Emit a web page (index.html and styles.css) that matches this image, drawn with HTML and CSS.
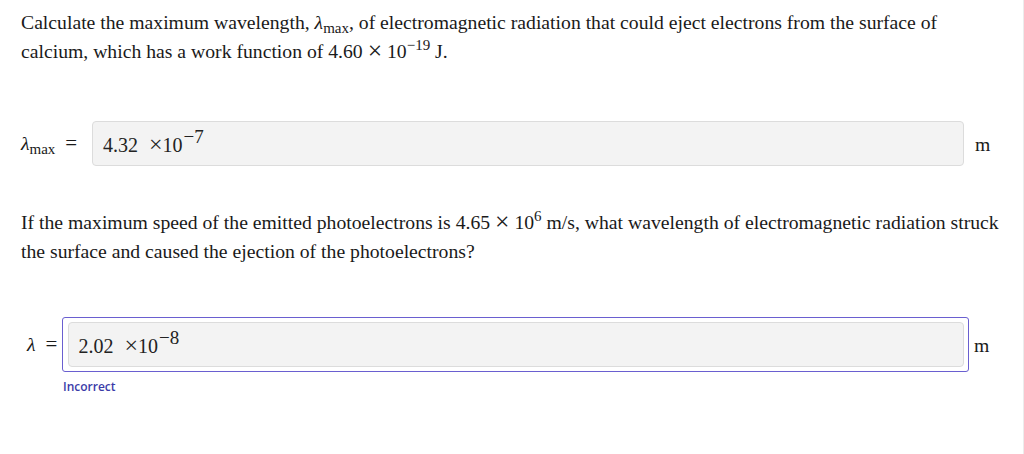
FILE: index.html
```html
<!DOCTYPE html>
<html>
<head>
<meta charset="utf-8">
<link rel="stylesheet" href="styles.css">
</head>
<body>
<div class="page">
  <p class="q q1">Calculate the maximum wavelength, <span class="lam">λ</span><sub class="sub">max</sub>, of electromagnetic radiation that could eject electrons from the surface of calcium, which has a work function of 4.60 <span class="x">×</span> 10<sup class="sup">−19</sup> J.</p>

  <div class="row row1">
    <div class="label label1"><span class="lam">λ</span><sub class="sub">max</sub> <span class="eq">=</span></div>
    <div class="field field1">
      <span class="num">4.32</span><span class="times"><span class="x">×</span>10</span><sup class="exp">−7</sup>
    </div>
    <div class="unit">m</div>
  </div>

  <p class="q q2">If the maximum speed of the emitted photoelectrons is 4.65 <span class="x">×</span> 10<sup class="sup">6</sup> m/s, what wavelength of electromagnetic radiation struck the surface and caused the ejection of the photoelectrons?</p>

  <div class="row row2">
    <div class="label label2"><span class="lam">λ</span> <span class="eq">=</span></div>
    <div class="focus">
      <div class="field field2">
        <span class="num">2.02</span><span class="times"><span class="x">×</span>10</span><sup class="exp">−8</sup>
      </div>
    </div>
    <div class="unit unit2">m</div>
  </div>
  <div class="feedback">Incorrect</div>
</div>
</body>
</html>
```

FILE: styles.css
```css
html, body {
  margin: 0;
  padding: 0;
  background: #ffffff;
}
body {
  width: 1024px;
  height: 454px;
  overflow: hidden;
  border-right: 1px solid #ececec;
  box-sizing: border-box;
}
.page {
  padding: 8px 0 0 21px;
  font-family: "Liberation Serif", "Times New Roman", serif;
  font-size: 19.7px;
  color: #1a1a1a;
}
.q {
  margin: 0;
  line-height: 29px;
  width: 985px;
}
.lam {
  font-style: italic;
}
.x {
  font-size: 1.3em;
  line-height: 0;
  vertical-align: -1px;
}
.sub {
  font-size: 15px;
  vertical-align: -4px;
  line-height: 0;
}
.sup {
  font-size: 15px;
  vertical-align: 8px;
  line-height: 0;
}
.row {
  display: flex;
  align-items: center;
}
.row1 {
  margin-top: 55px;
}
.label {
  white-space: nowrap;
}
.label1 {
  width: 71px;
}
.label2 {
  width: 35px;
  padding-left: 6px;
}
.eq {
  margin-left: 5px;
  font-size: 21px;
}
.field {
  box-sizing: border-box;
  height: 45px;
  background: #f3f3f3;
  border: 1px solid #dcdcdc;
  border-radius: 4px;
  font-family: "Liberation Serif", "Times New Roman", serif;
  font-size: 20px;
  color: #222;
  display: flex;
  align-items: baseline;
  padding: 12px 0 0 10px;
}
.field .x {
  font-size: 1.2em;
  vertical-align: 0;
}
.field1 {
  width: 872px;
}
.field2 {
  width: 100%;
}
.num {
  margin-right: 11px;
}
.exp {
  font-size: 19px;
  line-height: 0;
  position: relative;
  top: -9px;
  margin-left: 1px;
}
.unit {
  margin-left: 11px;
  margin-top: 2px;
}
.unit2 {
  margin-left: 5px;
}
.focus {
  box-sizing: border-box;
  width: 907px;
  height: 55px;
  border: 1.5px solid #6a5fd0;
  border-radius: 3px;
  padding: 3.5px 4.5px;
  background: #fff;
}
.row2 {
  margin-top: 51px;
}
.q2 {
  margin-top: 42px;
}
.feedback {
  margin: 6px 0 0 42px;
  font-family: "Open Sans", "Noto Sans", sans-serif;
  font-weight: 600;
  font-size: 12px;
  color: #3b3ba8;
}
```
